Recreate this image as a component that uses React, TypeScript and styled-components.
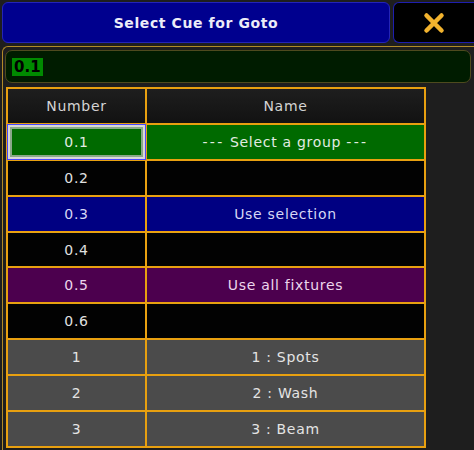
import React from "react";
import styled, { createGlobalStyle } from "styled-components";

const GlobalStyle = createGlobalStyle`
  html, body { margin: 0; padding: 0; background: #1c1c1c; }
  body { width: 474px; height: 450px; overflow: hidden; font-family: "DejaVu Sans", sans-serif; }
`;

const Screen = styled.div`
  width: 474px;
  height: 450px;
  background: #1e1e1e;
  display: flex;
  flex-direction: column;
  overflow: hidden;
`;

const TitleBar = styled.div`
  display: flex;
  gap: 3px;
  padding: 2px 0 0 2px;
  height: 41px;
`;

const TitleButton = styled.div`
  flex: 0 0 388px;
  box-sizing: border-box;
  background: #00008e;
  border: 1px solid #2424b8;
  border-radius: 6px;
  display: flex;
  align-items: center;
  justify-content: center;
  color: #ececf8;
  font-family: "DejaVu Sans", sans-serif;
  font-weight: bold;
  font-size: 14px;
  letter-spacing: 0.6px;
`;

const CloseButton = styled.div`
  flex: 1;
  box-sizing: border-box;
  background: #000;
  border: 1px solid #1e1eae;
  border-right: none;
  border-radius: 6px 0 0 6px;
  display: flex;
  align-items: center;
  justify-content: center;
`;

const Panel = styled.div`
  flex: 1;
  margin: 3px 0 0 2px;
  border-top: 1px solid #b08a28;
  border-left: 1px solid #b08a28;
  border-top-left-radius: 6px;
  background: #1e1e1e;
  padding: 3px 3px 0 2px;
  display: flex;
  flex-direction: column;
  gap: 4px;
`;

const InputBox = styled.div`
  height: 33px;
  box-sizing: border-box;
  background: #001c00;
  border: 1px solid #4e4a1e;
  border-radius: 7px;
  display: flex;
  align-items: center;
  padding-left: 6px;
`;

const Selected = styled.span`
  background: #008a00;
  color: #000;
  font-family: "DejaVu Sans", sans-serif;
  font-weight: bold;
  font-size: 15px;
  line-height: 18px;
  padding: 0 2px;
`;

const Grid = styled.div`
  margin-left: 1px;
  width: 420px;
  box-sizing: border-box;
  display: grid;
  grid-template-columns: 137px 277px;
  grid-auto-rows: 33.9px;
  gap: 2px;
  padding: 2px;
  background: #e8a010;
`;

type Tone = "head" | "green" | "black" | "blue" | "purple" | "gray";

const tones: Record<Tone, { bg: string; fg: string }> = {
  head: { bg: "linear-gradient(#1e1e1e, #121212)", fg: "#d4d4d4" },
  green: { bg: "#006a00", fg: "#e2ece2" },
  black: { bg: "#020202", fg: "#e0e0e0" },
  blue: { bg: "#000082", fg: "#d6d6f4" },
  purple: { bg: "#4c004e", fg: "#ecd6ec" },
  gray: { bg: "#4b4b4b", fg: "#e4e4e4" },
};

const Cell = styled.div<{ $tone: Tone; $focus?: boolean }>`
  background: ${(p) => tones[p.$tone].bg};
  color: ${(p) => tones[p.$tone].fg};
  display: flex;
  align-items: center;
  justify-content: center;
  font-family: "DejaVu Sans", sans-serif;
  font-size: 14px;
  letter-spacing: 0.7px;
  white-space: pre;
  ${(p) =>
    p.$focus
      ? `box-shadow: 0 0 0 1px #4848ff, inset 0 0 0 2px #d8d8d8, inset 0 0 0 4px #8aa88a;`
      : ""}
`;

const Dashes = styled.span`
  letter-spacing: 2.4px;
`;

const rows: { num: string; name: string; tone: Tone }[] = [
  { num: "0.1", name: "--- Select a group ---", tone: "green" },
  { num: "0.2", name: "", tone: "black" },
  { num: "0.3", name: "Use selection", tone: "blue" },
  { num: "0.4", name: "", tone: "black" },
  { num: "0.5", name: "Use all fixtures", tone: "purple" },
  { num: "0.6", name: "", tone: "black" },
  { num: "1", name: "1 : Spots", tone: "gray" },
  { num: "2", name: "2 : Wash", tone: "gray" },
  { num: "3", name: "3 : Beam", tone: "gray" },
];

const renderName = (name: string) => {
  if (name.startsWith("---")) {
    return (
      <span>
        <Dashes>---</Dashes>
        {name.slice(3, -3)}
        <Dashes>---</Dashes>
      </span>
    );
  }
  return name;
};

const CloseIcon = () => (
  <svg width="24" height="24" viewBox="0 0 24 24">
    <path d="M4.5 4.5 L19.5 19.5 M19.5 4.5 L4.5 19.5" stroke="#f2b32e" strokeWidth="4.5" strokeLinecap="round" fill="none" />
  </svg>
);

export default function App() {
  return (
    <Screen>
      <GlobalStyle />
      <TitleBar>
        <TitleButton>Select Cue for Goto</TitleButton>
        <CloseButton>
          <CloseIcon />
        </CloseButton>
      </TitleBar>
      <Panel>
        <InputBox>
          <Selected>0.1</Selected>
        </InputBox>
        <Grid>
          <Cell $tone="head">Number</Cell>
          <Cell $tone="head">Name</Cell>
          {rows.map((r, i) => (
            <React.Fragment key={r.num}>
              <Cell $tone={r.tone} $focus={i === 0}>{r.num}</Cell>
              <Cell $tone={r.tone}>{renderName(r.name)}</Cell>
            </React.Fragment>
          ))}
        </Grid>
      </Panel>
    </Screen>
  );
}
